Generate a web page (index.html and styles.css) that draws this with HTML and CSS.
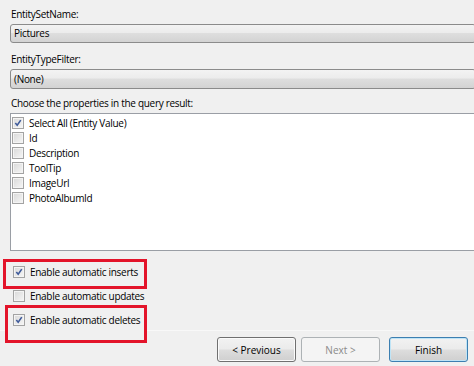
FILE: index.html
```html
<!DOCTYPE html>
<html lang="en">
<head>
    <meta charset="UTF-8">
    <title>Configure Data Selection</title>
    <link rel="stylesheet" href="styles.css">
</head>
<body>
    <div class="wizard">
        <div class="fields">
            <label class="field-label">EntitySetName:</label>
            <div class="combo">Pictures</div>

            <label class="field-label second">EntityTypeFilter:</label>
            <div class="combo tall">(None)</div>

            <label class="field-label third">Choose the properties in the query result:</label>
            <ul class="prop-list">
                <li><span class="check checked"><svg viewBox="0 0 9 9"><path d="M1.5 4.5 L3.6 7 L7.6 1.3"/></svg></span>Select All (Entity Value)</li>
                <li><span class="check"></span>Id</li>
                <li><span class="check"></span>Description</li>
                <li><span class="check"></span>ToolTip</li>
                <li><span class="check"></span>ImageUrl</li>
                <li><span class="check"></span>PhotoAlbumId</li>
            </ul>
        </div>

        <div class="options">
            <div class="option"><span class="check checked"><svg viewBox="0 0 9 9"><path d="M1.5 4.5 L3.6 7 L7.6 1.3"/></svg></span>Enable automatic inserts</div>
            <div class="option"><span class="check"></span>Enable automatic updates</div>
            <div class="option"><span class="check checked"><svg viewBox="0 0 9 9"><path d="M1.5 4.5 L3.6 7 L7.6 1.3"/></svg></span>Enable automatic deletes</div>

            <!-- red annotation frames -->
            <div class="mark mark-inserts"></div>
            <div class="mark mark-deletes"></div>
        </div>

        <div class="footer">
            <button class="btn">&lt; Previous</button>
            <button class="btn" disabled>Next &gt;</button>
            <button class="btn default">Finish</button>
        </div>
    </div>
</body>
</html>
```

FILE: styles.css
```css
body {
    margin: 0;
    background-color: #f0f0f0;
    font-family: "Open Sans", "Noto Sans", sans-serif;
    font-size: 10px;
    letter-spacing: -0.3px;
    color: #000;
    width: 474px;
    height: 366px;
    overflow: hidden;
}

.wizard {
    padding-top: 7px;
}

.fields {
    padding-left: 10px;
    margin-right: -2px;
}

.field-label {
    display: block;
    height: 15px;
    line-height: 15px;
    margin-left: 1px;
}

.field-label.second {
    margin-top: 9px;
}

.field-label.third {
    margin-top: 7px;
}

.combo {
    margin-top: 2px;
    height: 19px;
    line-height: 17px;
    box-sizing: border-box;
    border: 1px solid #8b8b8b;
    border-radius: 3px;
    padding-left: 3px;
    background: linear-gradient(#f3f3f3 0%, #ececec 45%, #dedede 50%, #d3d3d3 100%);
}

.combo.tall {
    height: 20px;
    line-height: 18px;
}

.prop-list {
    list-style: none;
    margin: 2px 0 0;
    padding: 1px 0 0 1px;
    height: 138px;
    box-sizing: border-box;
    border: 1px solid #9a9ea5;
    background-color: #fff;
}

.prop-list li {
    display: flex;
    align-items: center;
    height: 15px;
}

.check {
    display: inline-flex;
    align-items: center;
    justify-content: center;
    width: 12px;
    height: 12px;
    box-sizing: border-box;
    border: 1px solid #a3a3a3;
    background: linear-gradient(135deg, #d8d8d8, #f6f6f6);
    box-shadow: inset 0 0 0 1px #f4f4f4;
    margin-right: 5px;
    flex-shrink: 0;
}

.check svg {
    width: 8px;
    height: 8px;
}

.check path {
    fill: none;
    stroke: #3e5a9a;
    stroke-width: 1.8;
}

.options {
    position: relative;
    height: 79px;
    box-sizing: border-box;
    padding: 9px 0 0 13px;
}

.option {
    display: flex;
    align-items: center;
    height: 24px;
    position: relative;
    z-index: 2;
}

.mark {
    position: absolute;
    border: 3px solid #e3142a;
    box-sizing: border-box;
    background-color: #f0f0f0;
    z-index: 1;
}

.mark-inserts {
    left: 3px;
    top: 8px;
    width: 144px;
    height: 30px;
}

.mark-deletes {
    left: 5px;
    top: 54px;
    width: 142px;
    height: 38px;
}

.footer {
    border-top: 1px solid #f8f8f8;
    display: flex;
    justify-content: flex-end;
    padding: 6px 6px 0 0;
}

.btn {
    font: inherit;
    width: 79px;
    height: 25px;
    margin-left: 5px;
    border: 1px solid #707070;
    border-radius: 3px;
    color: #000;
    background: linear-gradient(#f2f2f2 0%, #ebebeb 48%, #dddddd 52%, #cfcfcf 100%);
    box-shadow: inset 0 0 0 1px #fbfbfb;
}

.btn:disabled {
    border-color: #adb2b5;
    background: #f4f4f4;
    color: #8a8a8a;
    box-shadow: none;
}

.btn.default {
    margin-left: 9px;
    border-color: #3c7fb1;
    box-shadow: inset 0 0 0 1px #bfe4f6;
}
```
